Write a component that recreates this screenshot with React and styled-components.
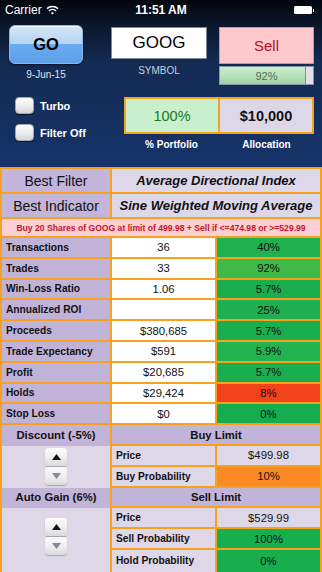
import React from 'react';
import styled, { createGlobalStyle } from 'styled-components';

const GlobalStyle = createGlobalStyle`
  html, body {
    margin: 0;
    padding: 0;
  }
  body {
    font-family: "Liberation Sans", Arial, Helvetica, sans-serif;
    background: #0b1730;
  }
  * {
    box-sizing: border-box;
  }
`;

const Screen = styled.div`
  width: 322px;
  height: 572px;
  overflow: hidden;
  display: flex;
  flex-direction: column;
  background: linear-gradient(180deg, #03060c 0px, #0a1529 22px, #132a52 60px, #16346a 167px);
`;

const StatusBar = styled.div`
  height: 20px;
  flex: none;
  display: grid;
  grid-template-columns: 1fr auto 1fr;
  align-items: center;
  padding: 0 5px;
  color: #fff;
  font-size: 12px;
`;

const Carrier = styled.div`
  display: flex;
  align-items: center;
  gap: 4px;
`;

const Clock = styled.div`
  font-weight: bold;
`;

const Battery = styled.div`
  justify-self: end;
  display: flex;
  align-items: center;
  margin-right: 3px;
`;

const BatteryBody = styled.div`
  width: 18px;
  height: 8px;
  border-radius: 1.5px;
  background: #fff;
`;

const BatteryNub = styled.div`
  width: 1.5px;
  height: 3px;
  background: #fff;
  margin-left: 1px;
`;

/* header panel */

const Header = styled.div`
  height: 147px;
  flex: none;
  padding: 5px 8px 0 9px;
`;

const TopRow = styled.div`
  display: flex;
  align-items: flex-start;
`;

const GoCol = styled.div`
  width: 74px;
  display: flex;
  flex-direction: column;
`;

const GoButton = styled.div`
  height: 39px;
  border-radius: 6px;
  border: 1px solid #8fb6df;
  background: linear-gradient(180deg, #d4e6f8 0%, #b5d3f3 50%, #6aaaf0 50%, #5c9fe9 100%);
  box-shadow: 0 1px 2px rgba(0, 0, 0, 0.6), inset 0 1px 0 rgba(255, 255, 255, 0.8);
  display: flex;
  align-items: center;
  justify-content: center;
  font-size: 16.5px;
  font-weight: bold;
  color: #000;
`;

const Caption = styled.div`
  margin-top: ${p => p.$top || 5}px;
  text-align: center;
  font-size: 10px;
  line-height: 12px;
  color: ${p => p.$color || '#dfe4eb'};
`;

const SymbolCol = styled.div`
  margin-left: 28px;
  width: 96px;
  padding-top: 2px;
`;

const SymbolBox = styled.div`
  height: 32px;
  background: #fff;
  border: 1px solid #7e8694;
  display: flex;
  align-items: center;
  justify-content: center;
  font-size: 17px;
  color: #000;
`;

const SellCol = styled.div`
  margin-left: 12px;
  width: 95px;
  padding-top: 2px;
`;

const SellBox = styled.div`
  height: 37px;
  background: #fdc9cd;
  border: 1px solid #9aa4b8;
  display: flex;
  align-items: center;
  justify-content: center;
  font-size: 15px;
  color: #b3101f;
`;

const Progress = styled.div`
  margin-top: 2px;
  height: 19px;
  background: #e2e1ea;
  border: 1px solid #8a97a8;
  position: relative;
  display: flex;
`;

const ProgressFill = styled.div`
  height: 100%;
  background: linear-gradient(180deg, #cdeecf 0%, #b3e0b6 60%, #9fd2a3 100%);
  border-right: 1px solid #6e9f73;
`;

const ProgressText = styled.span`
  position: absolute;
  inset: 0;
  display: flex;
  align-items: center;
  justify-content: center;
  font-size: 11px;
  color: #4f6e53;
`;

const BottomRow = styled.div`
  display: flex;
  margin-top: 12px;
`;

const CheckCol = styled.div`
  width: 115px;
  padding-left: 6px;
  display: flex;
  flex-direction: column;
  gap: 10px;
`;

const CheckItem = styled.label`
  display: flex;
  align-items: center;
  gap: 6px;
  color: #fff;
  font-size: 11px;
  font-weight: bold;
`;

const CheckBox = styled.span`
  width: 19px;
  height: 17px;
  border-radius: 4px;
  border: 1px solid #a3a8b0;
  background: linear-gradient(180deg, #fdfdfd 0%, #ececec 55%, #d6d6d9 100%);
  box-shadow: 0 1px 1px rgba(0, 0, 0, 0.5);
`;

const StatsCol = styled.div`
  width: 190px;
`;

const BoxPair = styled.div`
  display: grid;
  grid-template-columns: 1fr 1fr;
  gap: 2px;
  padding: 2px;
  height: 37px;
  background: #f6a21d;
`;

const StatBox = styled.div`
  background: ${p => p.$bg};
  color: ${p => p.$color || '#111'};
  font-size: 14.5px;
  font-weight: ${p => (p.$bold ? 'bold' : 'normal')};
  display: flex;
  align-items: center;
  justify-content: center;
`;

const PairLabels = styled.div`
  display: grid;
  grid-template-columns: 1fr 1fr;
  margin-top: 5px;
  color: #fff;
  font-size: 10px;
  font-weight: bold;
  text-align: center;
`;

/* table */

const Table = styled.div`
  flex: 1;
  min-height: 0;
  display: grid;
  grid-template-columns: 108px 103px 103px;
  grid-template-rows: 23px 23px 17px repeat(15, 18.8px) 1fr;
  gap: 2px;
  padding: 2px 2px 0;
  background: #f7a21e;
`;

const FilterLabel = styled.div`
  background: #c3b5d9;
  display: flex;
  align-items: center;
  justify-content: center;
  font-size: 14px;
  color: #111;
`;

const FilterValue = styled.div`
  grid-column: span 2;
  background: #ddd8e9;
  display: flex;
  align-items: center;
  justify-content: center;
  font-size: 13px;
  font-weight: bold;
  font-style: italic;
  color: #111;
`;

const Banner = styled.div`
  grid-column: span 3;
  background: #fccfd3;
  display: flex;
  align-items: center;
  justify-content: center;
  font-size: 8.6px;
  font-weight: bold;
  color: #c5142b;
  white-space: nowrap;
`;

const RowLabel = styled.div`
  background: ${p => p.$bg || '#c1b3d8'};
  display: flex;
  align-items: center;
  padding-left: 4px;
  font-size: 10.2px;
  font-weight: bold;
  color: #111;
  white-space: nowrap;
`;

const RowValue = styled.div`
  background: ${p => p.$bg || '#fff'};
  display: flex;
  align-items: center;
  justify-content: center;
  font-size: 11.3px;
  color: #111;
`;

const SidePanel = styled.div`
  grid-row: span 7;
  background: #ddd7e8;
  display: grid;
  grid-template-rows: 20.8px 41.6px 20.8px 1fr;
`;

const SideHead = styled.div`
  background: #c2b4d8;
  display: flex;
  align-items: center;
  justify-content: center;
  padding-bottom: 2px;
  font-size: 11.3px;
  font-weight: bold;
  color: #111;
`;

const StepperSlot = styled.div`
  display: flex;
  justify-content: center;
  align-items: ${p => (p.$top ? 'flex-start' : 'center')};
  padding-top: ${p => (p.$top ? 10 : 0)}px;
`;

const Stepper = styled.div`
  display: flex;
  flex-direction: column;
  gap: 1px;
`;

const StepButton = styled.div`
  width: 22px;
  height: 18px;
  border-radius: ${p => (p.$up ? '4px 4px 1px 1px' : '1px 1px 4px 4px')};
  background: linear-gradient(180deg, #fbfbfb 0%, #ececee 60%, #d9d9dc 100%);
  box-shadow: 0 1px 1px rgba(0, 0, 0, 0.25);
  display: flex;
  align-items: center;
  justify-content: center;
`;

const LimitHead = styled.div`
  grid-column: span 2;
  background: #c2b4d8;
  display: flex;
  align-items: center;
  justify-content: center;
  font-size: 11.3px;
  font-weight: bold;
  color: #111;
`;

const WifiIcon = () => (
  <svg width="13" height="10" viewBox="0 0 13 10">
    <path d="M1 3.6 A8 8 0 0 1 12 3.6" fill="none" stroke="#fff" strokeWidth="1.5" />
    <path d="M3 5.9 A5 5 0 0 1 10 5.9" fill="none" stroke="#fff" strokeWidth="1.5" />
    <path d="M4.9 7.9 A2.4 2.4 0 0 1 8.1 7.9 L6.5 9.6 Z" fill="#fff" />
  </svg>
);

const Arrow = ({ up }) => (
  <svg width="9" height="6" viewBox="0 0 9 6">
    {up ? <polygon points="4.5,0 9,6 0,6" fill="#111" /> : <polygon points="0,0 9,0 4.5,6" fill="#8a8a8e" />}
  </svg>
);

const stats = [
  { label: 'Transactions', value: '36', pct: '40%', bg: '#1fb04f' },
  { label: 'Trades', value: '33', pct: '92%', bg: '#3dba47' },
  { label: 'Win-Loss Ratio', value: '1.06', pct: '5.7%', bg: '#1aae4e' },
  { label: 'Annualized ROI', value: '', pct: '25%', bg: '#1daf50' },
  { label: 'Proceeds', value: '$380,685', pct: '5.7%', bg: '#1aae4e' },
  { label: 'Trade Expectancy', value: '$591', pct: '5.9%', bg: '#22b350' },
  { label: 'Profit', value: '$20,685', pct: '5.7%', bg: '#1aae4e' },
  { label: 'Holds', value: '$29,424', pct: '8%', bg: '#f1421c' },
  { label: 'Stop Loss', value: '$0', pct: '0%', bg: '#15ad4f' },
];

const StepControl = () => (
  <Stepper>
    <StepButton $up><Arrow up /></StepButton>
    <StepButton><Arrow /></StepButton>
  </Stepper>
);

export default function App() {
  return (
    <>
      <GlobalStyle />
      <Screen>
        <StatusBar>
          <Carrier>Carrier <WifiIcon /></Carrier>
          <Clock>11:51 AM</Clock>
          <Battery><BatteryBody /><BatteryNub /></Battery>
        </StatusBar>

        <Header>
          <TopRow>
            <GoCol>
              <GoButton>GO</GoButton>
              <Caption>9-Jun-15</Caption>
            </GoCol>
            <SymbolCol>
              <SymbolBox>GOOG</SymbolBox>
              <Caption $top={6} $color="#c9d0da">SYMBOL</Caption>
            </SymbolCol>
            <SellCol>
              <SellBox>Sell</SellBox>
              <Progress>
                <ProgressFill style={{ width: '92%' }} />
                <ProgressText>92%</ProgressText>
              </Progress>
            </SellCol>
          </TopRow>

          <BottomRow>
            <CheckCol>
              <CheckItem><CheckBox />Turbo</CheckItem>
              <CheckItem><CheckBox />Filter Off</CheckItem>
            </CheckCol>
            <StatsCol>
              <BoxPair>
                <StatBox $bg="#c8efce" $color="#1b7a1d">100%</StatBox>
                <StatBox $bg="#ddd8e8" $bold>$10,000</StatBox>
              </BoxPair>
              <PairLabels>
                <span>% Portfolio</span>
                <span>Allocation</span>
              </PairLabels>
            </StatsCol>
          </BottomRow>
        </Header>

        <Table>
          <FilterLabel>Best Filter</FilterLabel>
          <FilterValue>Average Directional Index</FilterValue>
          <FilterLabel>Best Indicator</FilterLabel>
          <FilterValue>Sine Weighted Moving Average</FilterValue>
          <Banner>Buy 20 Shares of GOOG at limit of 499.98 + Sell if &lt;=474.98 or &gt;=529.99</Banner>

          {stats.map(s => (
            <React.Fragment key={s.label}>
              <RowLabel>{s.label}</RowLabel>
              <RowValue>{s.value}</RowValue>
              <RowValue $bg={s.bg}>{s.pct}</RowValue>
            </React.Fragment>
          ))}

          <SidePanel>
            <SideHead>Discount (-5%)</SideHead>
            <StepperSlot><StepControl /></StepperSlot>
            <SideHead>Auto Gain (6%)</SideHead>
            <StepperSlot $top><StepControl /></StepperSlot>
          </SidePanel>

          <LimitHead>Buy Limit</LimitHead>
          <RowLabel $bg="#ddd7e8">Price</RowLabel>
          <RowValue $bg="#ddd7e8">$499.98</RowValue>
          <RowLabel $bg="#ddd7e8">Buy Probability</RowLabel>
          <RowValue $bg="#f98a25">10%</RowValue>

          <LimitHead>Sell Limit</LimitHead>
          <RowLabel $bg="#ddd7e8">Price</RowLabel>
          <RowValue $bg="#ddd7e8">$529.99</RowValue>
          <RowLabel $bg="#ddd7e8">Sell Probability</RowLabel>
          <RowValue $bg="#17ae4e">100%</RowValue>
          <RowLabel $bg="#ddd7e8">Hold Probability</RowLabel>
          <RowValue $bg="#17ae4e">0%</RowValue>
        </Table>
      </Screen>
    </>
  );
}
